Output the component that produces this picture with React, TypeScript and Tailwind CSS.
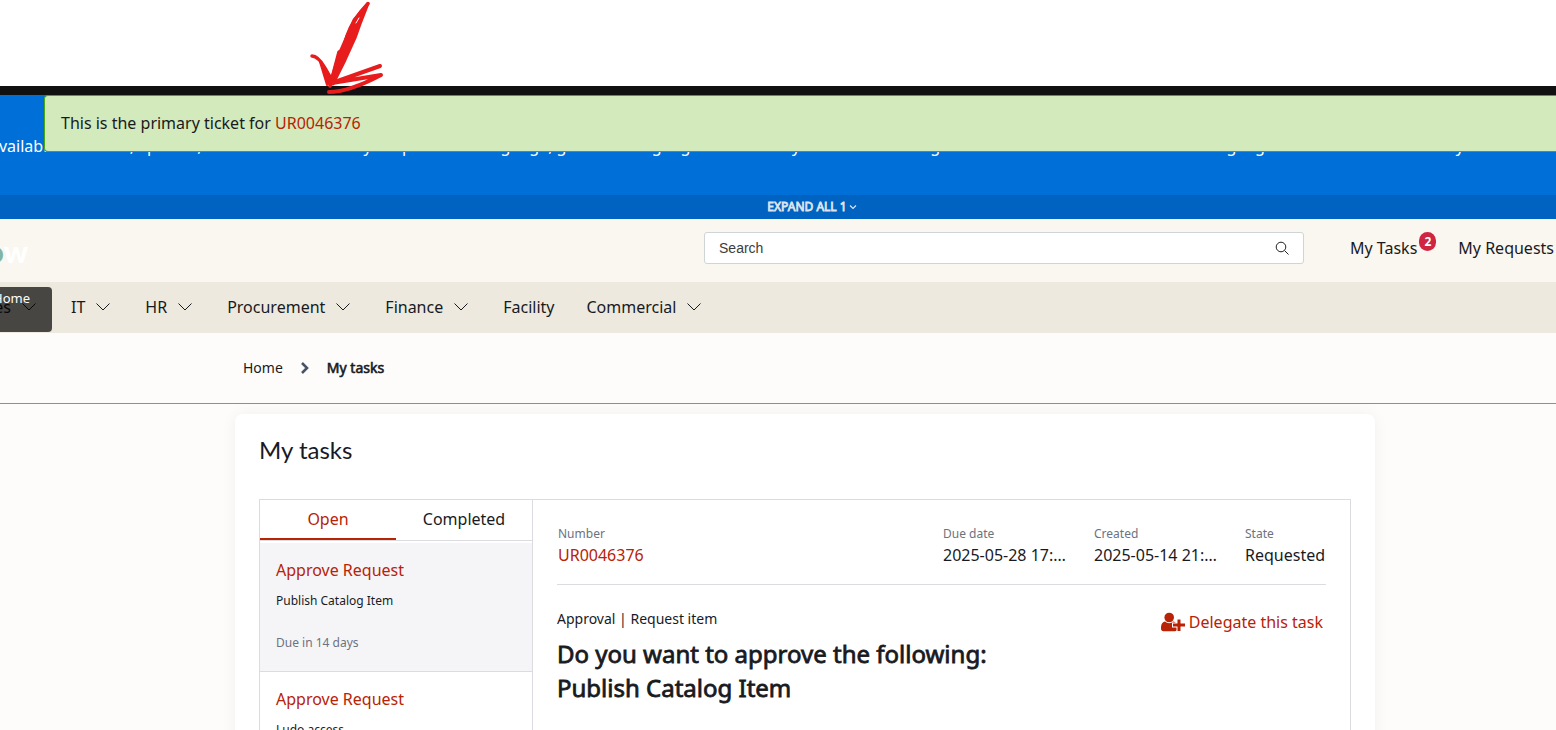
import React from 'react';

const Chevron: React.FC = () => (
  <svg className="w-5 h-5" viewBox="0 0 20 20" fill="none" stroke="currentColor" strokeWidth="1">
    <path d="M3.500 6.500 10 13l6.500-6.500" />
  </svg>
);

const UserPlusIcon: React.FC = () => (
  <svg className="w-6 h-5" viewBox="0 0 24 20" fill="currentColor">
    <circle cx="8.200" cy="5.500" r="4.800" />
    <path d="M4.200 9.600c1 1.100 2.500 1.700 4 1.700s3-.6 4-1.700c3.200.3 4.300 3.400 4.300 6.900 0 1.700-1 2.800-2.600 2.800H2.500C1 19.300 0 18.200 0 16.500 0 13 1 9.900 4.200 9.600Z" />
    <path d="M16.500 7.500h3v4H24v3h-4.500v4.500h-3v-4.500H12v-3h4.500z" stroke="#fff" strokeWidth="2" paintOrder="stroke" />
  </svg>
);

const NavItem: React.FC<{ label: string; menu?: boolean }> = ({ label, menu = true }) => (
  <a href="#" className="flex items-center gap-2 whitespace-nowrap">
    {label}
    {menu && <Chevron />}
  </a>
);

const TaskItem: React.FC<{ title: string; item: string; due: string; active?: boolean }> = ({ title, item, due, active }) => (
  <li className={`px-4 pt-[15px] pb-[18px] border-b border-[#dadce2] ${active ? 'bg-[#f5f5f8]' : 'bg-white'}`}>
    <a href="#" className="block leading-6 text-[#b82205]">{title}</a>
    <p className="mt-[9px] text-xs leading-5">{item}</p>
    <p className="mt-[22px] text-xs leading-5 text-[#6b7280]">{due}</p>
  </li>
);

const Field: React.FC<{ label: string; className?: string; children: React.ReactNode }> = ({ label, className = '', children }) => (
  <div className={className}>
    <dt className="text-xs leading-5 text-[#6b7280]">{label}</dt>
    <dd className="truncate leading-[22px]">{children}</dd>
  </div>
);

const App: React.FC = () => {
  return (
    <div className="h-screen overflow-hidden bg-[#fdfcfa] font-['Noto_Sans',sans-serif] text-base text-[#181a1f]">
      <div className="relative bg-white pt-[86px]">
        <div className="h-[9px] bg-[#111111]" />
        <svg className="absolute left-[300px] top-0 z-20 h-24 w-24" viewBox="0 0 96 96" fill="none" stroke="#e81c1c" strokeLinecap="round" strokeLinejoin="round">
          <path d="M68 3.500C60 12 51 24 47 36L43 50L39 52L30 86" strokeWidth="3.500" />
          <path d="M68 3.500 60 24 55 38 45 60 33 84 30 84 40 52 47 36 54 20 66 6Z" fill="#e81c1c" strokeWidth="3" />
          <path d="M12 56c5 0 9 5 13 12l8 14" strokeWidth="3.500" />
          <path d="M20 62l7 23 6-5Z" fill="#e81c1c" strokeWidth="2" />
          <path d="M56 23 59 18" stroke="#fff" strokeWidth="1" />
          <path d="M80 66 32 83 81 75C64 84 46 92 29 92" strokeWidth="4" />
        </svg>
      </div>

      {/* Announcement */}
      <section className="relative bg-[#006fd8] text-white">
        <p className="-ml-2.5 overflow-hidden whitespace-nowrap pt-[39px] pb-[37px] leading-6">
          available in French, Spanish, or Chinese. To select your preferred language, go to the language menu from your header settings. Please note that articles in other languages are translated manually and are then shown to all
        </p>
        <button className="flex h-6 w-full items-center justify-center gap-0.5 bg-[#0063c1] pl-[68px] text-xs text-[#dce4ec] [-webkit-text-stroke:0.8px]">
          EXPAND ALL 1
          <svg className="h-2 w-2" viewBox="0 0 8 8" fill="none" stroke="currentColor" strokeWidth="1.200">
            <path d="M1 2.500 4 5.500 7 2.500" />
          </svg>
        </button>
        <div role="alert" className="absolute top-0 left-11 right-0 rounded-l border border-r-0 border-[#4ba614] bg-[#d3eabc] px-4 pt-[15px] pb-4 leading-6">
          <p className="text-[#181a1f]">
            This is the primary ticket for <a href="#" className="text-[#b82205]">UR0046376</a>
          </p>
        </div>
      </section>

      <header className="flex h-[63px] items-center justify-between bg-[#faf7f0] pr-0.5">
        <a href="#" className="flex w-7 justify-end overflow-hidden font-['Lato',sans-serif] text-[30px] font-black leading-9">
          <span className="text-[#85b5a1]">o</span>
          <span className="text-white">w</span>
        </a>
        <div className="flex items-center pb-[5px]">
          <div className="flex h-8 w-[600px] items-center rounded-[3px] border border-[#cfd4d6] bg-white pr-3">
            <input type="text" aria-label="Search" placeholder="Search" className="min-w-0 flex-1 px-3.5 font-['Liberation_Sans',sans-serif] text-sm outline-none placeholder:text-[#3c3c3c]" />
            <button aria-label="Submit search">
              <svg className="h-[18px] w-[18px]" viewBox="0 0 18 18" fill="none" stroke="#222" strokeWidth="1">
                <circle cx="8" cy="8" r="4.800" />
                <path d="m11.500 11.500 4 4" />
              </svg>
            </button>
          </div>
          <a href="#" className="relative ml-[46px]">
            My Tasks
            <span className="absolute -top-1 left-full ml-0.5 flex h-[19px] w-[17px] items-center justify-center rounded-full bg-[#cf2540] text-xs font-bold text-white">2</span>
          </a>
          <a href="#" className="ml-[41px]">My Requests</a>
        </div>
      </header>

      <nav className="relative flex h-[51px] items-center gap-8 bg-[#ede9de] pb-0.5">
        <div className="flex w-[39px] justify-end overflow-hidden">
          <NavItem label="Services" />
        </div>
        <NavItem label="IT" />
        <NavItem label="HR" />
        <NavItem label="Procurement" />
        <NavItem label="Finance" />
        <NavItem label="Facility" menu={false} />
        <NavItem label="Commercial" />
        <div role="tooltip" className="absolute top-[5px] left-0 flex h-[45px] w-[52px] justify-end overflow-hidden rounded-r bg-black/70 pr-[22px] pt-0.5 text-[13px] leading-[18px] text-white">
          Home
        </div>
      </nav>

      <div className="border-b border-[#8590a2] pl-[54px]">
        <ol className="mx-auto flex h-[70px] max-w-[1140px] items-center px-2 text-sm">
          <li><a href="#">Home</a></li>
          <li aria-hidden="true" className="mx-[17px]">
            <svg className="h-3 w-2.5" viewBox="0 0 10 12" fill="none" stroke="#475467" strokeWidth="2.600">
              <path d="M2 1 7 6 2 11" />
            </svg>
          </li>
          <li className="[-webkit-text-stroke:0.6px]">My tasks</li>
        </ol>
      </div>

      <div className="pt-[10px] pl-[54px]">
        <main className="mx-auto max-w-[1140px] rounded-lg bg-white px-6 pt-5 shadow-[0_0_16px_rgba(0,0,0,0.05)]">
          <h1 className="font-['Lato',sans-serif] text-2xl">My tasks</h1>
          <div className="mt-[33px] flex min-h-80 border border-[#dadce2]">
            <aside className="w-[273px] shrink-0 border-r border-[#dadce2]">
              <div className="mb-0.5 flex h-[41px] border-b border-[#dadce2]">
                <button className="flex-1 border-b-2 border-[#b82205] text-[#b82205]">Open</button>
                <button className="flex-1 border-b-2 border-transparent">Completed</button>
              </div>
              <ul>
                <TaskItem title="Approve Request" item="Publish Catalog Item" due="Due in 14 days" active />
                <TaskItem title="Approve Request" item="Ludo access" due="Due in 14 days" />
              </ul>
            </aside>
            <section className="min-w-0 flex-1 px-6 pt-6">
              <dl className="flex gap-[27px] border-b border-[#dadce2] pb-[18px] pl-px">
                <Field label="Number" className="flex-1">
                  <a href="#" className="text-[#b82205]">UR0046376</a>
                </Field>
                <Field label="Due date" className="w-[124px]">2025-05-28 17:26:41</Field>
                <Field label="Created" className="w-[124px]">2025-05-14 21:26:41</Field>
                <Field label="State" className="w-[81px]">Requested</Field>
              </dl>
              <div className="flex items-start justify-between pt-6">
                <div>
                  <p className="text-sm">Approval | Request item</p>
                  <h2 className="mt-2 text-2xl leading-[34px] [-webkit-text-stroke:0.8px]">
                    Do you want to approve the following:<br />Publish Catalog Item
                  </h2>
                </div>
                <a href="#" className="flex items-center gap-1 pt-px pr-[3px] text-[#b82205]">
                  <UserPlusIcon />
                  Delegate this task
                </a>
              </div>
            </section>
          </div>
        </main>
      </div>
    </div>
  );
};

export default App;
